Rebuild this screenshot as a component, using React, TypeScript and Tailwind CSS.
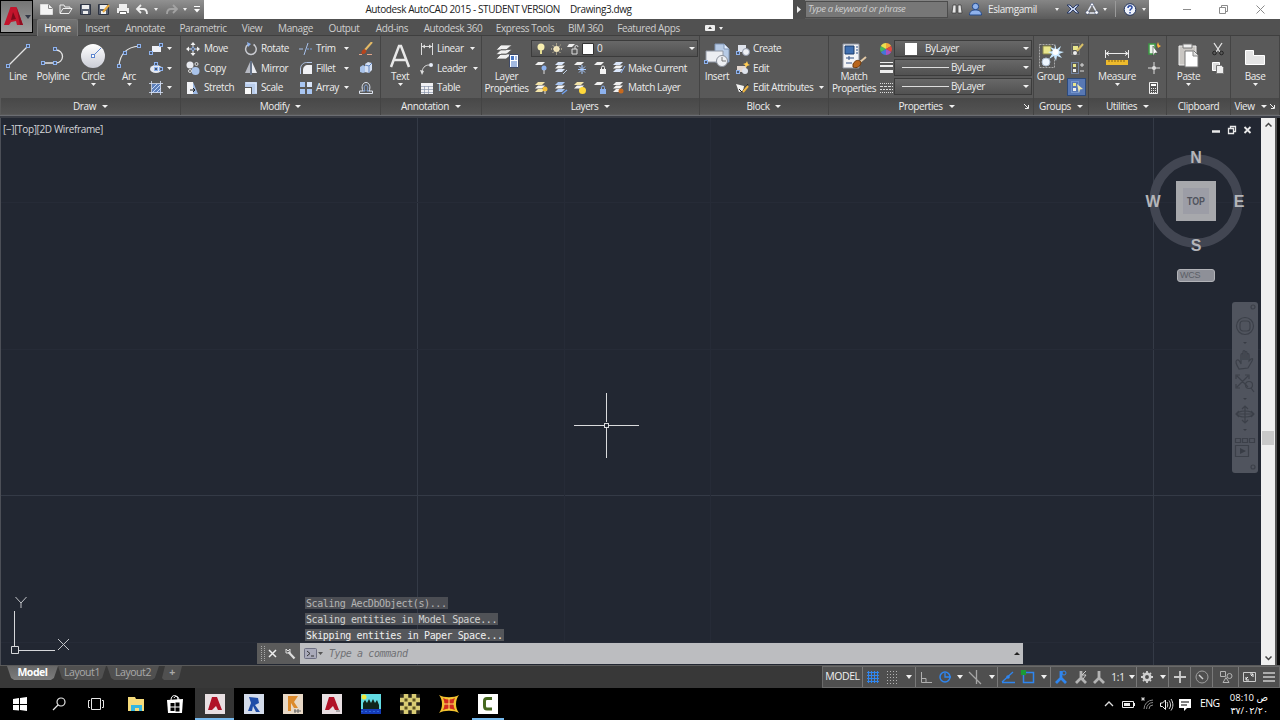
import React from "react";

type IconProps = { w?: number; h?: number; className?: string; children: React.ReactNode };

const Svg = ({ w = 14, h = 14, className = "", children }: IconProps) => (
  <svg width={w} height={h} viewBox={`0 0 ${w} ${h}`} fill="none" className={`shrink-0 ${className}`}>
    {children}
  </svg>
);

const Caret = ({ className = "" }: { className?: string }) => (
  <Svg w={5} h={3} className={className}>
    <path d="M0 0h5L2.500 3z" fill="#f2f2f2" />
  </Svg>
);

const Node = ({ x, y }: { x: number; y: number }) => (
  <rect x={x - 1.5} y={y - 1.5} width="3" height="3" fill="#4b566b" stroke="#8db2ee" />
);

/* ---------- big ribbon icons ---------- */

const LineIcon = () => (
  <Svg w={26} h={26}>
    <path d="M3 23L23 3" stroke="#e4e4e4" strokeWidth="1.2" />
    <Node x={3} y={23} />
    <Node x={23} y={3} />
  </Svg>
);
const PolylineIcon = () => (
  <Svg w={26} h={26}>
    <path d="M3 20h13a6.500 6.500 0 0 0 0-13" stroke="#e4e4e4" strokeWidth="1.3" />
    <Node x={3} y={20} />
    <Node x={15} y={20} />
    <Node x={15} y={6} />
  </Svg>
);
const CircleIcon = () => (
  <Svg w={26} h={26}>
    <defs>
      <linearGradient id="disc" x1="0" y1="0" x2="0" y2="1">
        <stop stopColor="#ffffff" />
        <stop offset="1" stopColor="#cbcdd6" />
      </linearGradient>
    </defs>
    <circle cx="13" cy="13" r="12" fill="url(#disc)" />
    <path d="M13 13l8-8" stroke="#5e86cf" />
    <rect x="11.500" y="11.500" width="3" height="3" fill="#fff" stroke="#5e86cf" />
  </Svg>
);
const ArcIcon = () => (
  <Svg w={26} h={26}>
    <path d="M3 23C4 11 11 4 23 3" stroke="#e4e4e4" strokeWidth="1.2" />
    <Node x={3} y={23} />
    <Node x={9} y={10} />
    <Node x={23} y={3} />
  </Svg>
);
const TextIcon = () => (
  <Svg w={22} h={26}>
    <path d="M2 24L10 3h2l8 21M5.500 17h11" stroke="#e8e8e8" strokeWidth="2.500" />
  </Svg>
);
const LayerPropsIcon = () => (
  <Svg w={26} h={26}>
    <path d="M7 2h11l-6 5H2zM7 6.500h11l-6 5H2zM7 11h11l-6 5H2z" fill="#f1f1f1" stroke="#555" strokeWidth=".7" />
    <path d="M15.500 11.500h9v13h-9z" fill="#fff" stroke="#3f4a66" />
    <path d="M17 13h3v4h-3z" fill="#4775c4" />
    <path d="M21 14h2M21 16h2M17 19h6M17 21h6M17 23h6" stroke="#4775c4" />
  </Svg>
);
const InsertIcon = () => (
  <Svg w={26} h={26}>
    <path d="M11 1h9l5 5v13H11z" fill="#b7cbe6" stroke="#8298b8" />
    <path d="M20 1v5h5" fill="#e5efff" stroke="#8298b8" />
    <path d="M2 8h17v11H2z" fill="#eceef2" stroke="#9097a5" />
    <circle cx="18" cy="18" r="5.500" fill="#eef0f4" stroke="#8a909c" />
    <path d="M18 18v-4M18 18h4" stroke="#777" />
    <Node x={2} y={19} />
  </Svg>
);
const MatchIcon = () => (
  <Svg w={26} h={26}>
    <path d="M2 1h16v24H2z" fill="#f4f4f6" stroke="#8d93a0" />
    <path d="M4 3h9v8H4z" fill="#3f6fb0" stroke="#1f3f6c" />
    <path d="M15 4h2M15 7h2M15 10h2M5 15h8M8 13v4M5 20h6" stroke="#2d4d80" />
    <path d="M25 14l-6 5" stroke="#e3c9a5" strokeWidth="2" />
    <path d="M12 21c3-5 6-4 8-2 0 4-4 7-8 5z" fill="#b8651d" stroke="#6f3a0c" />
  </Svg>
);
const GroupIcon = () => (
  <Svg w={28} h={26}>
    <path d="M2.500 1.500h15v23h-15z" stroke="#a9a9a9" strokeDasharray="2 1" />
    <path d="M6 3h8v8H6z" fill="#e9e68c" stroke="#8c8a4e" />
    <circle cx="9" cy="19" r="4" fill="#eef6ff" stroke="#aebed0" />
    <path d="M18 1l1.500 5.500L24 3l-2 5 5 1-5 2 3 4-5-2-1 5-2-5-5 3 3-5-4-2 5-1-3-4 5 2z" fill="#c9e8ff" />
    <circle cx="18.500" cy="9" r="3" fill="#fff" />
  </Svg>
);
const MeasureIcon = () => (
  <Svg w={26} h={26}>
    <path d="M1.500 7v8M24.500 7v8M2 10.500h22M5 8.500l-3 2 3 2M21 8.500l3 2-3 2" stroke="#ececec" />
    <path d="M2 17h22v5H2z" fill="#edba2c" />
    <path d="M5 17v2M8 17v2M11 17v2M14 17v2M17 17v2M20 17v2" stroke="#8a6510" />
  </Svg>
);
const PasteIcon = () => (
  <Svg w={24} h={26}>
    <path d="M2 3h17v19H2z" fill="#c9c6c2" stroke="#eee" />
    <path d="M6 1h9v4H6z" fill="#efefef" stroke="#777" />
    <path d="M8 8h9l4 4v12H8z" fill="#fff" stroke="#777" />
    <path d="M16 8v5h5" fill="#ddd" stroke="#888" />
  </Svg>
);
const BaseIcon = () => (
  <Svg w={24} h={26}>
    <path d="M2.500 7.500h8v5h11v9h-19z" fill="#e4e4e4" stroke="#fff" />
  </Svg>
);

/* ---------- small ribbon icons ---------- */

const RectIcon = () => (
  <Svg>
    <path d="M3 4h9v6H3z" fill="#eef0f6" />
    <Node x={2} y={11} />
    <Node x={12} y={3} />
  </Svg>
);
const EllipseIcon = () => (
  <Svg>
    <ellipse cx="7" cy="8" rx="6" ry="4" fill="#e6e9f1" />
    <Node x={7} y={8} />
    <Node x={12} y={8} />
    <Node x={7} y={3} />
  </Svg>
);
const HatchIcon = () => (
  <Svg>
    <path d="M3 3h9v9H3z" fill="#5d7fb9" />
    <path d="M3 8l5-5M3 12l9-9M7 12l5-5" stroke="#c5d7f5" />
    <path d="M2.500 0v14M11.500 0v14M0 2.500h14M0 11.500h14" stroke="#d7e1f5" strokeWidth=".8" />
  </Svg>
);
const MoveIcon = () => (
  <Svg>
    <path d="M7 0l2.500 3h-5zM7 14l-2.500-3h5zM0 7l3-2.500v5zM14 7l-3-2.500v5z" fill="#f1f1f1" />
    <path d="M7 3v2M7 9v2M3 7h2M9 7h2" stroke="#eee" />
    <circle cx="7" cy="7" r="1.500" stroke="#8db2ee" />
  </Svg>
);
const CopyIcon = () => (
  <Svg>
    <circle cx="4" cy="4" r="3.500" fill="#e8eaf0" />
    <circle cx="9.500" cy="10" r="4" fill="#a9c3ea" />
    <circle cx="10.500" cy="3" r="1.500" stroke="#ddd" />
    <circle cx="4" cy="10" r="1.500" stroke="#ddd" />
  </Svg>
);
const StretchIcon = () => (
  <Svg>
    <path d="M1 1h6l5 12H1z" fill="#9db9e4" />
    <path d="M1 1h6v12H1z" fill="#f3f4f7" />
    <path d="M4 9h4M7 7l2 2-2 2" stroke="#222" />
  </Svg>
);
const RotateIcon = () => (
  <Svg>
    <path d="M9.500 2.500A5.300 5.300 0 1 1 4 2.700" stroke="#c8cad0" strokeWidth="1.500" />
    <path d="M3 0l4 2-3 3z" fill="#8db2ee" />
  </Svg>
);
const MirrorIcon = () => (
  <Svg>
    <path d="M6 1v11H1z" fill="#b6b9c2" />
    <path d="M8 1v11h5z" fill="#e9ebf1" />
    <path d="M7 0v14" stroke="#7fa5e0" strokeWidth=".7" />
  </Svg>
);
const ScaleIcon = () => (
  <Svg>
    <path d="M1 1h12v12H8V6H1z" fill="#b9cdec" />
    <path d="M1 7h6v6H1z" fill="#fafafa" />
    <path d="M2 2h10v10" stroke="#e8f0ff" />
  </Svg>
);
const TrimIcon = () => (
  <Svg>
    <path d="M0 7h4M9 1L5 13" stroke="#a7c1eb" />
    <path d="M8 7h6" stroke="#7fa5e0" strokeDasharray="2 1" />
  </Svg>
);
const FilletIcon = () => (
  <Svg>
    <path d="M4 13V9c0-3 2-5 5-5h4v9z" fill="#f0f1f5" />
    <path d="M1.500 13V8c0-4 3-6.500 6-6.500H13" stroke="#b4c8ea" />
  </Svg>
);
const ArrayIcon = () => (
  <Svg>
    <path d="M1 1h5v5H1zM8 8h5v5H8zM1 8h5v5H1z" fill="#a9c6f2" />
    <path d="M8 1h5v5H8z" fill="#d9e6fa" />
  </Svg>
);
const EraseIcon = () => (
  <Svg>
    <path d="M13 0L6 8" stroke="#e4ba66" strokeWidth="2" />
    <path d="M3 9c1-2 3-2 4-1 1 2-1 4-3 4s-2-1-1-3z" fill="#b8451d" />
    <path d="M0 12.500h3M8 12.500h5" stroke="#e2a58a" />
  </Svg>
);
const ExplodeIcon = () => (
  <Svg>
    <path d="M1 6l3-2 3 2v5l-3 1-3-1z" fill="#a9c3ea" />
    <path d="M6 3l3-2 4 1v7l-3 3-4-1z" fill="#d3dff3" />
    <path d="M6 4l4 1v7M10 5l3-3" stroke="#6284bd" />
  </Svg>
);
const OffsetIcon = () => (
  <Svg>
    <path d="M.5 12.500h13M.5 12.500V10h3.500C2 6 3.500 1.500 7 1.500s5 4.500 3 8.500h3.500v2.500" stroke="#dfe5f0" />
    <path d="M4 10h2C4.500 6 5.500 4 7 4s2.500 2 1 6h2" stroke="#86a9e0" />
  </Svg>
);
const LinearIcon = () => (
  <Svg>
    <path d="M1.500 1v12M12.500 1v12M2 4.500h10" stroke="#dcdcdc" />
    <path d="M2 4.500l3-2v4zM12 4.500l-3-2v4z" fill="#dcdcdc" />
  </Svg>
);
const LeaderIcon = () => (
  <Svg>
    <path d="M2 12C2 7 5 4 9 4" stroke="#dcdcdc" />
    <circle cx="11" cy="4" r="2" fill="#e8eefa" />
    <path d="M0 9l2 5 2-4z" fill="#dcdcdc" />
  </Svg>
);
const TableIcon = () => (
  <Svg>
    <path d="M1 2h12v11H1z" fill="#f1f1f3" />
    <path d="M1 5.500h12M1 8.500h12M1 11.500h12M4.500 5v8M8.500 5v8" stroke="#8995ab" strokeWidth=".7" />
  </Svg>
);

const Layer = ({ n = 3, color = "#efefef", children }: { n?: number; color?: string; children?: React.ReactNode }) => (
  <Svg>
    {n > 0 && <path d="M4 1h7L8 4H1z" fill={color} />}
    {n > 1 && <path d="M4 4.500h7l-3 3H1z" fill="#f5f5f5" />}
    {n > 2 && <path d="M4 8h7l-3 3H1z" fill={color} />}
    {children}
  </Svg>
);
const Padlock = ({ color }: { color: string }) => (
  <>
    <path d="M7 8h6v5H7z" fill={color} />
    <path d="M8.500 8V6.500a1.500 1.500 0 0 1 3 0V8" stroke={color} />
  </>
);

const layerRow1 = [
  <Layer n={1}><circle cx="10" cy="7" r="2.500" fill="#8db2ee" /><path d="M10 9v4" stroke="#ddd" /></Layer>,
  <Layer color="#dbe7fb"><path d="M9 13l4-4" stroke="#bcd" /></Layer>,
  <Layer n={1}><path d="M9 4v9M5 8.500h8M6 5.500l6 6M12 5.500l-6 6" stroke="#a9cbff" /></Layer>,
  <Layer n={1}><Padlock color="#f2f2f2" /></Layer>,
];
const layerRow2 = [
  <Layer color="#f3e4a8"><circle cx="11" cy="8" r="2.500" fill="#f3bd36" /><path d="M11 10v3" stroke="#ddd" /></Layer>,
  <Layer color="#a9c6f2"><path d="M8 13l5-4" stroke="#6fa0f0" strokeWidth="1.500" /></Layer>,
  <Layer n={2} color="#f3e4a8"><circle cx="9.500" cy="9.500" r="3.500" fill="#ffd83b" /></Layer>,
  <Layer n={1}><Padlock color="#8db2ee" /></Layer>,
];

const BlockCreate = () => (
  <Svg>
    <path d="M2 3h8v7H2z" fill="#dfe3ec" />
    <circle cx="10" cy="10" r="3.500" fill="#eef0f5" stroke="#8f97a8" />
    <Node x={2} y={11} />
  </Svg>
);
const BlockEdit = () => (
  <Svg>
    <path d="M1 5h9v6H1z" fill="#e3d7cf" />
    <circle cx="9" cy="10" r="3" fill="#dfe3ec" />
    <path d="M11 0l1 3 2 1-3 1-1 2-1-3-2-1 3-1z" fill="#ffcb52" />
    <Node x={2} y={11} />
  </Svg>
);
const EditAttr = () => (
  <Svg>
    <path d="M0 3l8 2-1 5-4 1z" fill="#f3f3f3" />
    <path d="M3 8l3 3 6-8" stroke="#222" />
    <path d="M7 11l5-6" stroke="#efb541" strokeWidth="2" />
  </Svg>
);
const ColorWheel = () => (
  <Svg>
    <path d="M7 7V1a6 6 0 0 1 5.200 3z" fill="#f2a83a" />
    <path d="M7 7l5.200-3a6 6 0 0 1 0 6z" fill="#e2483c" />
    <path d="M7 7l5.200 3A6 6 0 0 1 7 13z" fill="#a854c0" />
    <path d="M7 7v6a6 6 0 0 1-5.200-3z" fill="#4575d8" />
    <path d="M7 7l-5.200 3a6 6 0 0 1 0-6z" fill="#45b85c" />
    <path d="M7 7L1.800 4A6 6 0 0 1 7 1z" fill="#eadf4c" />
  </Svg>
);
const WeightIcon = () => (
  <Svg>
    <path d="M1 1.500h13" stroke="#eee" />
    <path d="M1 5h13" stroke="#eee" strokeWidth="2" />
    <path d="M1 10.500h13" stroke="#eee" strokeWidth="3" />
  </Svg>
);
const LinetypeIcon = () => (
  <Svg>
    <path d="M1 2.500h13M1 11.500h13" stroke="#ddd" strokeDasharray="1 1" />
    <path d="M1 5.500h13" stroke="#ddd" strokeDasharray="3 1" />
    <path d="M1 8.500h13" stroke="#ddd" strokeDasharray="2 1" />
  </Svg>
);
const GroupEdit = () => (
  <Svg>
    <path d="M1.500 1.500h8v11h-8z" stroke="#888" strokeDasharray="1 1" />
    <path d="M3 4h5v4H3z" fill="#e9e68c" />
    <circle cx="5" cy="11" r="2" fill="#eee" />
    <path d="M7 9l6-7" stroke="#d8bf66" strokeWidth="2" />
  </Svg>
);
const Ungroup = ({ arrow = false }: { arrow?: boolean }) => (
  <Svg>
    <path d="M1.500 1.500h7v11h-7z" stroke="#8fb0e6" strokeDasharray="1 1" />
    <path d="M3 3h3v3H3z" fill="#e9e68c" />
    <path d="M3 8h3v3H3z" fill="#eee" />
    {arrow ? <path d="M7 4l6 5-3 .5L9 13z" fill="#efe9b0" /> : <path d="M10 4h4M12 2v4M10 10h4" stroke="#ddd" />}
  </Svg>
);
const QuickSelect = () => (
  <Svg>
    <path d="M2 2h6v10H2z" fill="#e9f4e9" stroke="#3c9a44" strokeWidth="1.500" />
    <path d="M6 4l5 7-3 0-2 3z" fill="#fff" stroke="#444" strokeWidth=".6" />
    <path d="M11 0l1 3 2 1-3 2-1-3z" fill="#ffb43b" />
  </Svg>
);
const PointIcon = () => (
  <Svg>
    <path d="M7 1v12M1 7h12" stroke="#ddd" />
    <circle cx="7" cy="7" r="2" fill="#ddd" />
  </Svg>
);
const CalcIcon = () => (
  <Svg>
    <path d="M2.500 1.500h8v11h-8z" fill="#555" stroke="#eee" />
    <path d="M4 3h5v2H4z" fill="#fff" />
    <path d="M4 7.500h5M4 9.500h5M4 11.500h5" stroke="#eee" strokeDasharray="1 1" />
  </Svg>
);
const CutIcon = () => (
  <Svg>
    <path d="M3 1l6 9M11 1L5 10" stroke="#e4e4e4" strokeWidth="1.300" />
    <circle cx="3.500" cy="11" r="1.800" stroke="#222" />
    <circle cx="10.500" cy="11" r="1.800" stroke="#222" />
  </Svg>
);
const CopyClipIcon = () => (
  <Svg>
    <path d="M1.500 1.500h7v8h-7z" fill="#ddd" stroke="#fff" />
    <path d="M5.500 4.500h5l2 2v6h-7z" fill="#eee" stroke="#777" />
  </Svg>
);

/* ---------- ribbon building blocks ---------- */

const Big = ({ icon, lines, width, caret = false }: { icon: React.ReactNode; lines: string[]; width: string; caret?: boolean }) => (
  <div className={`flex shrink-0 flex-col items-center pt-0.5 ${width}`}>
    <div className="flex h-[29px] items-center">{icon}</div>
    {lines.map((l) => (
      <span key={l} className="h-3 leading-3 whitespace-nowrap">{l}</span>
    ))}
    {caret && <Caret className="mt-px" />}
  </div>
);

const Row = ({ icon, text, caret, gap = "gap-[3px]" }: { icon: React.ReactNode; text?: string; caret?: string; gap?: string }) => (
  <div className={`flex h-[19px] items-center nth-2:h-5 ${gap}`}>
    {icon}
    {text && <span className="whitespace-nowrap">{text}</span>}
    {caret && <Caret className={caret} />}
  </div>
);

const Panel = ({ title, width, caret = true, launcher = false, children }: { title: string; width: string; caret?: boolean; launcher?: boolean; children: React.ReactNode }) => (
  <section className={`flex h-full shrink-0 flex-col border-r border-[#444] ${width}`}>
    <div className="flex h-[62px] pt-[3px]">{children}</div>
    <div className="flex h-[16px] items-center bg-linear-to-b from-[#484848] to-[#535353]">
      <div className="flex flex-1 items-center justify-center gap-[6px]">
        <span className="leading-4">{title}</span>
        {caret && <Svg w={6} h={3}><path d="M0 0h6L3 3z" fill="#f2f2f2" /></Svg>}
      </div>
      {launcher && (
        <Svg w={5} h={5} className="mr-1">
          <path d="M0 0l4 4M4.500 1v3.500H1" stroke="#eee" />
        </Svg>
      )}
    </div>
  </section>
);

const Combo = ({ children }: { children: React.ReactNode }) => (
  <div className="flex h-[17px] items-center border border-[#3b3b3b] bg-linear-to-b from-[#686868] to-[#515151] pr-[2px]">
    {children}
    <Svg w={6} h={3} className="ml-auto"><path d="M0 0h6L3 3z" fill="#f2f2f2" /></Svg>
  </div>
);

const Ribbon = () => (
  <div className="flex h-[79px] bg-[#595959] pl-px text-[10px] tracking-[-0.420px] text-[#ededed]">
    <Panel title="Draw" width="w-[180px]">
      <Big icon={<LineIcon />} lines={["Line"]} width="w-[34px]" />
      <Big icon={<PolylineIcon />} lines={["Polyline"]} width="w-9" />
      <Big icon={<CircleIcon />} lines={["Circle"]} width="w-11" caret />
      <Big icon={<ArcIcon />} lines={["Arc"]} width="w-7" caret />
      <div className="pl-1.5">
        <Row icon={<RectIcon />} caret="ml-px" />
        <Row icon={<EllipseIcon />} caret="ml-px" />
        <Row icon={<HatchIcon />} caret="ml-px" />
      </div>
    </Panel>

    <Panel title="Modify" width="w-[200px]">
      <div className="w-[62px] pl-[5px]">
        <Row icon={<MoveIcon />} text="Move" gap="gap-1" />
        <Row icon={<CopyIcon />} text="Copy" gap="gap-1" />
        <Row icon={<StretchIcon />} text="Stretch" gap="gap-1" />
      </div>
      <div className="w-14 pl-px">
        <Row icon={<RotateIcon />} text="Rotate" />
        <Row icon={<MirrorIcon />} text="Mirror" />
        <Row icon={<ScaleIcon />} text="Scale" />
      </div>
      <div className="w-[50px]">
        <Row icon={<TrimIcon />} text="Trim" caret="ml-auto" />
        <Row icon={<FilletIcon />} text="Fillet" caret="ml-auto" />
        <Row icon={<ArrayIcon />} text="Array" caret="ml-auto" />
      </div>
      <div className="pl-[10px]">
        <Row icon={<EraseIcon />} />
        <Row icon={<ExplodeIcon />} />
        <Row icon={<OffsetIcon />} />
      </div>
    </Panel>

    <Panel title="Annotation" width="w-[101px]">
      <Big icon={<TextIcon />} lines={["Text"]} width="w-[38px]" caret />
      <div className="pl-px">
        <Row icon={<LinearIcon />} text="Linear" caret="ml-[3px]" />
        <Row icon={<LeaderIcon />} text="Leader" caret="ml-[3px]" />
        <Row icon={<TableIcon />} text="Table" />
      </div>
    </Panel>

    <Panel title="Layers" width="w-[218px]">
      <Big icon={<LayerPropsIcon />} lines={["Layer", "Properties"]} width="w-[49px]" />
      <div className="w-[167px]">
        <div className="h-[19px] pt-px">
          <Combo>
            <Svg w={64} h={14} className="ml-1">
              <circle cx="5" cy="5" r="3.500" fill="#f8efb0" />
              <path d="M4 8h2v4H4z" fill="#e5dc90" />
              <circle cx="20.500" cy="7" r="3" fill="#f6e9bd" />
              <path d="M20.500 1.500v11M15 7h11M16.500 3l8 8M24.500 3l-8 8" stroke="#e9dcb4" strokeDasharray="1 1" />
              <path d="M33 2h6l-3 3h-5z" fill="#efefef" />
              <path d="M36 7h5v5h-5z" stroke="#ddd" />
              <path d="M39 7V5a1.500 1.500 0 0 1 3 0" stroke="#ddd" />
              <path d="M46.500 1.500h11v11h-11z" fill="#fff" stroke="#333" />
            </Svg>
            <span className="-ml-[3px]">0</span>
          </Combo>
        </div>
        <div className="flex h-[20px] items-center pl-[3px]">
          {layerRow1.map((icon, i) => <div key={i} className="w-[19.500px]">{icon}</div>)}
          <Layer color="#dbe7fb"><path d="M9 12l4-7" stroke="#8db2ee" /></Layer>
          <span className="ml-[2px] whitespace-nowrap">Make Current</span>
        </div>
        <div className="flex h-[19px] items-center pl-[3px]">
          {layerRow2.map((icon, i) => <div key={i} className="w-[19.500px]">{icon}</div>)}
          <Layer><circle cx="9" cy="10" r="2.500" fill="#c86a1e" /></Layer>
          <span className="ml-[2px] whitespace-nowrap">Match Layer</span>
        </div>
      </div>
    </Panel>

    <Panel title="Block" width="w-[129px]">
      <Big icon={<InsertIcon />} lines={["Insert"]} width="w-[34px]" />
      <div className="pl-[2px]">
        <Row icon={<BlockCreate />} text="Create" />
        <Row icon={<BlockEdit />} text="Edit" />
        <Row icon={<EditAttr />} text="Edit Attributes" caret="ml-[3px]" />
      </div>
    </Panel>

    <Panel title="Properties" width="w-[205px]" launcher>
      <Big icon={<MatchIcon />} lines={["Match", "Properties"]} width="w-[50px]" />
      <div className="w-[15px]">
        <Row icon={<ColorWheel />} />
        <Row icon={<WeightIcon />} />
        <Row icon={<LinetypeIcon />} />
      </div>
      <div className="flex w-[138px] flex-col gap-[2px] pt-px">
        <Combo>
          <div className="ml-[10px] size-[12px] bg-white" />
          <span className="ml-[8px]">ByLayer</span>
        </Combo>
        <Combo>
          <div className="ml-[7px] h-px w-[47px] bg-[#ddd]" />
          <span className="ml-[2px]">ByLayer</span>
        </Combo>
        <Combo>
          <div className="ml-[7px] h-px w-[47px] bg-[#ddd]" />
          <span className="ml-[2px]">ByLayer</span>
        </Combo>
      </div>
    </Panel>

    <Panel title="Groups" width="w-[55px]">
      <Big icon={<GroupIcon />} lines={["Group"]} width="w-[33px]" />
      <div>
        <div className="flex h-[19px] items-center px-[3px]"><GroupEdit /></div>
        <div className="flex h-[20px] items-center px-[3px]"><Ungroup /></div>
        <div className="flex h-[18px] w-[19px] items-center border border-[#2c4a7c] bg-[#5878b4] px-[2px]"><Ungroup arrow /></div>
      </div>
    </Panel>

    <Panel title="Utilities" width="w-[78px]">
      <Big icon={<MeasureIcon />} lines={["Measure"]} width="w-14" caret />
      <div className="pl-[2px]">
        <Row icon={<QuickSelect />} />
        <Row icon={<PointIcon />} />
        <Row icon={<CalcIcon />} />
      </div>
    </Panel>

    <Panel title="Clipboard" width="w-16" caret={false}>
      <Big icon={<PasteIcon />} lines={["Paste"]} width="w-[43px]" caret />
      <div className="pl-px">
        <Row icon={<CutIcon />} />
        <Row icon={<CopyClipIcon />} />
      </div>
    </Panel>

    <Panel title="View" width="w-[49px]" launcher>
      <Big icon={<BaseIcon />} lines={["Base"]} width="w-12" caret />
    </Panel>
  </div>
);

/* ---------- title bar ---------- */

const TitleBar = () => (
  <div className="relative flex h-[19px] bg-white text-[10px]">
    <div className="absolute top-0 left-0 z-10 flex h-[33px] w-[33px] items-center gap-px border border-black bg-linear-to-b from-[#757575] to-[#a0a0a0] pl-[3px]">
      <Svg w={20} h={22}>
        <path d="M6.500 1h6l6.500 18h-6l-1-4-5 1-2 3H0z" fill="#c3142c" />
        <path d="M9 6l-2 8 5-1z" fill="#7a0b1b" />
        <path d="M12.500 1l6.500 18h-3z" fill="#8f0d20" />
      </Svg>
      <Svg w={6} h={4}><path d="M0 0h6L3 4z" fill="#333846" /></Svg>
    </div>
    <div className="ml-[33px] flex w-[171px] items-center bg-linear-to-b from-[#919191] to-[#646464]">
      <Svg w={171} h={19}>
        <path d="M7.500 4.500h8l4 4v6h-12z" fill="#f5f5f5" stroke="#ddd" />
        <path d="M15.500 4.500v4h4" stroke="#888" />
        <path d="M27 13V5h4l1 2h5v2" stroke="#eee" />
        <path d="M27 13.500l3-5h9l-3 5z" fill="#777" stroke="#eee" />
        <path d="M47.500 4.500h10v10h-10z" fill="#596172" stroke="#2e3442" />
        <path d="M49 5h7v4h-7zM50 11h5v3h-5z" fill="#eee" />
        <path d="M65.500 4.500h10v10h-10z" fill="#596172" stroke="#2e3442" />
        <path d="M67 5h7v4h-7zM68 11h5v3h-5z" fill="#eee" />
        <path d="M70 12l6-7" stroke="#e8a83a" strokeWidth="2" />
        <path d="M86 4h8v4h-8zM84 8h12v5H84z" fill="#eee" />
        <path d="M86.500 11.500h7v3h-7z" fill="#fff" stroke="#666" />
        <path d="M105 9h5c3 0 4 2 4 5M108 5l-4 4 4 4" stroke="#efefef" strokeWidth="1.800" />
        <path d="M121 8h4l-2 3zM150 8h4l-2 3z" fill="#eee" />
        <path d="M143 9h-5c-3 0-4 2-4 5M140 5l4 4-4 4" stroke="#a3a3a3" strokeWidth="1.800" />
        <path d="M161 6.500h6" stroke="#fff" />
        <path d="M161 9h6l-3 3.500z" fill="#fff" />
      </Svg>
    </div>
    <div className="flex w-[589px] items-center justify-center gap-[10px] tracking-[-0.400px] whitespace-pre text-[#222]">
      <span>Autodesk AutoCAD 2015 - STUDENT VERSION</span>
      <span>Drawing3.dwg</span>
    </div>
    <div className="flex w-[356px] items-center bg-linear-to-b from-[#868686] to-[#5b5b5b] text-[#ededed]">
      <Svg w={12} h={19} className="bg-[#4e4e4e]"><path d="M4 6l4 3.500L4 13z" fill="#eee" /></Svg>
      <div className="flex h-[17px] w-[143px] items-center border border-[#4c4c4c] bg-[#777] pl-[2px] text-[9.500px] tracking-[-0.430px] whitespace-nowrap text-[#cfcfcf] italic">
        Type a keyword or phrase
      </div>
      <Svg w={36} h={19}>
        <path d="M4 13l1-8h3v8zM10 13V5h3l1 8z" fill="#e6e6e6" stroke="#333" strokeWidth=".7" />
        <circle cx="27.500" cy="6.500" r="3.200" fill="#8fb2ec" stroke="#234a8c" />
        <path d="M21.500 15c0-4 3-5 6-5s6 1 6 5z" fill="#8fb2ec" stroke="#234a8c" />
      </Svg>
      <span className="ml-[4px] tracking-[-0.400px]">Eslamgamil</span>
      <Svg w={104} h={19} className="ml-auto">
        <path d="M1 8h4l-2 3zM49 8h4l-2 3zM88 8h4l-2 3z" fill="#eee" transform="translate(9 0)" />
        <path d="M22 5l4 4-4 4h3l3-3 3 3h3l-4-4 4-4h-3l-3 3-3-3z" fill="#c5d2ee" stroke="#23335f" strokeWidth=".9" />
        <path d="M42 13l5-9 5 9z" stroke="#e8ecf6" strokeWidth="1.500" />
        <circle cx="47" cy="4.500" r="1.500" fill="#fff" stroke="#34436a" strokeWidth=".6" />
        <circle cx="42.500" cy="12.500" r="1.800" fill="#fff" stroke="#34436a" strokeWidth=".6" />
        <circle cx="51.500" cy="12.500" r="1.800" fill="#fff" stroke="#34436a" strokeWidth=".6" />
        <path d="M70.500 1v16" stroke="#9a9a9a" />
        <circle cx="85" cy="9.500" r="5.800" fill="#eef2fb" stroke="#24365f" />
        <path d="M83 8c0-3 4-3 4-.5 0 1.500-2 1.500-2 3.200M85 12v1.500" stroke="#2848a0" strokeWidth="1.500" />
      </Svg>
    </div>
    <Svg w={131} h={19}>
      <path d="M34 9.500h8M107.500 5.500l8 8M115.500 5.500l-8 8M70.500 7.500h6v6h-6z" stroke="#8b8b8b" />
      <path d="M72.500 7v-1.500h6v6H77" stroke="#8b8b8b" />
    </Svg>
  </div>
);

const tabs: [string, string][] = [
  ["Insert", "w-[39px]"],
  ["Annotate", "w-[56px]"],
  ["Parametric", "w-[60px]"],
  ["View", "w-[38px]"],
  ["Manage", "w-[49px]"],
  ["Output", "w-[48px]"],
  ["Add-ins", "w-[48px]"],
  ["Autodesk 360", "w-[74px]"],
  ["Express Tools", "w-[70px]"],
  ["BIM 360", "w-[51px]"],
  ["Featured Apps", "w-[75px]"],
];

const TabBar = () => (
  <div className="flex h-[17px] border-b border-[#3f3f3f] bg-[#515151] pl-[37px] text-[10px] leading-[18px] tracking-[-0.400px] text-[#cfcfcf]">
    <div className="h-[17px] w-[41px] rounded-t-xs border border-b-0 border-[#7a7a7a] bg-linear-to-b from-[#737373] to-[#5e5e5e] text-center leading-[17px] text-white">Home</div>
    {tabs.map(([name, width]) => (
      <div key={name} className={`flex shrink-0 justify-center whitespace-nowrap ${width}`}>{name}</div>
    ))}
    <Svg w={20} h={17} className="ml-[19px]">
      <rect x="0" y="6" width="10" height="6" rx="1" fill="#eee" />
      <path d="M3 10h4L5 7.500z" fill="#444" />
      <path d="M14 8h4l-2 3z" fill="#eee" />
    </Svg>
  </div>
);

/* ---------- drawing area ---------- */

const ViewCube = () => (
  <div className="absolute top-[32px] left-[1143px] h-[140px] w-[106px] font-['Liberation_Sans',sans-serif]">
    <Svg w={106} h={140}>
      <circle cx="53" cy="51" r="42" stroke="#424652" strokeWidth="9" />
      <rect x="33" y="31" width="40" height="40" fill="#a7a8ac" />
      <rect x="40" y="38" width="26" height="26" fill="#9c9da6" />
      <rect x="34.500" y="119.500" width="37" height="12" rx="2.500" fill="#8e9098" stroke="#b2b3b8" />
    </Svg>
    <div className="absolute top-0 left-[43px] w-5 text-center text-[16px] leading-4 font-bold text-[#b4b5b9]">N</div>
    <div className="absolute top-[88px] left-[43px] w-5 text-center text-[16px] leading-4 font-bold text-[#b4b5b9]">S</div>
    <div className="absolute top-[44px] left-0 w-5 text-center text-[16px] leading-4 font-bold text-[#b4b5b9]">W</div>
    <div className="absolute top-[44px] left-[86px] w-5 text-center text-[16px] leading-4 font-bold text-[#b4b5b9]">E</div>
    <div className="absolute top-[44px] left-[38px] w-[30px] scale-x-80 text-center text-[11px] leading-[15px] font-bold text-[#50535d]">TOP</div>
    <div className="absolute top-[118px] left-[37px] text-[9px] leading-[14px] tracking-[-0.200px] text-[#5b5e66]">WCS</div>
  </div>
);

const NavBar = () => (
  <div className="absolute top-[184px] left-[1232px]">
    <Svg w={26} h={171}>
      <rect width="26" height="171" rx="3" fill="#50545e" />
      <g stroke="#3c4049" strokeWidth="1.200">
        <circle cx="21" cy="5" r="2" />
        <circle cx="13" cy="24" r="8.500" />
        <rect x="8" y="19" width="10" height="10" rx="3" />
        <path d="M7 67C4 62 3 59 5 58s3 2 4 4v-9c0-2 2-2 2 0v5-8c0-2 2-2 2 0v8-7c0-2 2-2 2 0v7-5c0-2 2-2 2 0v6l2-2c2-1 2 0 1 2l-4 7z" />
        <path d="M5 74l11 11M16 74L5 85M4 77v-4h4M13 73h4v4M4 82v4h4" />
        <circle cx="17" cy="83" r="3.500" />
        <path d="M19 86l3 4M13 104v17M4 112h18M10 107l3-3 3 3M10 118l3 3 3-3M7 109l-3 3 3 3M19 109l3 3-3 3" />
        <ellipse cx="13" cy="112" rx="8" ry="3" />
        <path d="M3.500 136.500h5v4h-5zM10.500 136.500h5v4h-5zM17.500 136.500h5v4h-5zM3.500 143.500h13v11h-13z" />
        <circle cx="21" cy="165" r="2" />
      </g>
      <path d="M11 40h4l-2 2zM11 96h4l-2 2zM11 127h4l-2 2zM8 146l6 3-6 3z" fill="#383c45" />
    </Svg>
  </div>
);

const history: [string, string][] = [
  ["Scaling AecDbObject(s)...", "bg-[#4b4d53] text-[#b4b4b4]"],
  ["Scaling entities in Model Space...", "bg-[#505257] text-[#d2d2d2]"],
  ["Skipping entities in Paper Space...", "bg-[#55575b] text-[#f0f0f0]"],
];

const CommandLine = () => (
  <div className="absolute top-[479px] left-[257px] w-[766px] font-['DejaVu_Sans_Mono','Liberation_Mono',monospace] text-[10px] tracking-[-0.400px]">
    <div className="flex flex-col items-start gap-1 pl-[48px]">
      {history.map(([text, color]) => (
        <div key={text} className={`h-3 px-px leading-[14px] whitespace-pre ${color}`}>{text}</div>
      ))}
    </div>
    <div className="mt-[2px] flex h-[21px] items-center bg-[#bcbdc0]">
      <Svg w={43} h={21} className="bg-[#5b5b5b]">
        <path d="M4.500 3v15M7.500 3v15" stroke="#aaa" strokeDasharray="1 1" />
        <path d="M12 7l7 7M19 7l-7 7" stroke="#eee" strokeWidth="1.500" />
        <path d="M31.500 9l6 6.500" stroke="#ddd" strokeWidth="2.200" />
        <path d="M29 6l2 2 2-2v4h-4z" stroke="#ddd" />
      </Svg>
      <Svg w={24} h={21}>
        <rect x="4.500" y="5.500" width="12" height="10" rx="1" fill="#a9aaba" stroke="#6d6f82" />
        <path d="M7 8l3 2.500L7 13M11 13h3" stroke="#333" />
        <path d="M18 9h5l-2.500 3z" fill="#555" />
      </Svg>
      <span className="ml-[5px] text-[#707175] italic">Type a command</span>
      <Svg w={6} h={4} className="mr-[3px] ml-auto"><path d="M0 3h6L3 0z" fill="#222" /></Svg>
    </div>
  </div>
);

const Canvas = () => (
  <div className="flex h-[547px]">
    <div className="relative w-[1261px] overflow-hidden border-l border-[#4c4f57] bg-[#222732]">
      <div className="absolute top-0 -left-px h-full w-[1261px]">
        <Svg w={1261} h={547}>
          <path d="M417.500 0v547M1153.500 0v547M0 377.500h1261" stroke="#343a46" />
          <path d="M710.500 0v547M564.500 0v547M0 84.500h1261M0 231.500h1261M0 524.500h1261" stroke="#262b37" />
          <path d="M606.500 275v29M606.500 310v30M574 307.500h30M609 307.500h30" stroke="#dadbdd" />
          <rect x="604.500" y="305.500" width="4" height="4" stroke="#dadbdd" />
          <path d="M14.500 493v35M18 532.500h37M11.500 528.500h7v7h-7z" stroke="#d5d6d9" />
          <path d="M15.500 479l5.500 6v5M26.500 479l-5.500 6M58 521l11 11M69 521l-11 11" stroke="#c2c4c8" />
          <path d="M1212 13.500h8" stroke="#e9e9e9" strokeWidth="2.500" />
          <path d="M1228.500 10.500h5v5h-5zM1230.500 10V8.500h5v5h-2" stroke="#e9e9e9" strokeWidth="1.300" />
          <path d="M1244.500 9l6 6M1250.500 9l-6 6" stroke="#e9e9e9" strokeWidth="1.800" />
        </Svg>
        <div className="absolute top-[4px] left-[3px] text-[10px] leading-[14px] tracking-[-0.360px] text-[#d5d6d9]">[−][Top][2D Wireframe]</div>
        <ViewCube />
        <NavBar />
        <CommandLine />
      </div>
    </div>
    <div className="flex w-[14px] flex-col items-center bg-[#efefef] py-[4px]">
      <Svg w={7} h={5}><path d="M.5 4.500l3-3 3 3" stroke="#444" strokeWidth="1.500" /></Svg>
      <div className="mt-[304px] h-[14px] w-3 bg-[#c9c9c9]" />
      <Svg w={7} h={5} className="mt-auto"><path d="M.5 .5l3 3 3-3" stroke="#444" strokeWidth="1.500" /></Svg>
    </div>
    <div className="flex-1 border-l-2 border-[#555] bg-[#0c0c0c]" />
  </div>
);

/* ---------- status bar ---------- */

const Cell = ({ w, sep = false, children }: { w: string; sep?: boolean; children: React.ReactNode }) => (
  <div className={`flex h-full shrink-0 items-center justify-center ${w} ${sep ? "border-r border-[#797979]" : ""}`}>{children}</div>
);
const Down = () => <Svg w={6} h={4}><path d="M0 0h6L3 4z" fill="#f0f0f0" /></Svg>;
const Person = ({ color, children }: { color: string; children?: React.ReactNode }) => (
  <Svg>
    <path d="M7 1v7M7 6v2l-5 5M7 8l5 5" stroke={color} strokeWidth="2.800" />
    {children}
  </Svg>
);

const StatusBar = () => (
  <div className="flex h-[23px] justify-between border-t border-[#5a5a5a] bg-[#383838] text-[10.500px] tracking-[-0.450px]">
    <div className="flex h-[14px] pl-[7px] leading-[13px] text-[#aaa]">
      <div className="w-[51px] bg-linear-to-b from-[#666] to-[#7d7d7d] text-center font-bold text-white [clip-path:polygon(0_0,100%_0,92%_85%,86%_100%,14%_100%,8%_85%)]">Model</div>
      <div className="w-[48px] bg-[#505050] text-center [clip-path:polygon(0_0,100%_0,92%_85%,86%_100%,14%_100%,8%_85%)]">Layout1</div>
      <div className="ml-px w-[52px] bg-[#505050] text-center [clip-path:polygon(0_0,100%_0,92%_85%,86%_100%,14%_100%,8%_85%)]">Layout2</div>
      <div className="ml-[3px] w-[20px] bg-[#505050] text-center font-bold [clip-path:polygon(15%_0,100%_0,85%_85%,75%_100%,10%_100%,0_85%)]">+</div>
    </div>
    <div className="flex h-[22px] w-[458px] border border-[#6a6a6a] bg-[#4f4f4f] text-[#f0f0f0]">
      <Cell w="w-[40px]" sep>MODEL</Cell>
      <Cell w="w-[20px]">
        <Svg><path d="M2.500 1v12M5.500 1v12M8.500 1v12M11.500 1v12M1 2.500h12M1 5.500h12M1 8.500h12M1 11.500h12" stroke="#2f86f0" /></Svg>
      </Cell>
      <Cell w="w-[20px]">
        <Svg>
          <path d="M1 1.500h12M1 4.500h12M1 7.500h12M1 10.500h12M1 13.500h12" stroke="#b4b4b4" strokeDasharray="1 2" />
        </Svg>
      </Cell>
      <Cell w="w-[13px]" sep><Down /></Cell>
      <Cell w="w-[19px]"><Svg><path d="M2.500 2v10.500H13M3 8.500h4v4" stroke="#b0b0b0" /></Svg></Cell>
      <Cell w="w-[19px]">
        <Svg>
          <circle cx="7" cy="7" r="5" stroke="#2f86f0" strokeWidth="1.500" />
          <path d="M7 3v4h6" stroke="#2f86f0" strokeWidth="1.300" />
        </Svg>
      </Cell>
      <Cell w="w-[12px]"><Down /></Cell>
      <Cell w="w-[20px]"><Svg w={16} h={16}><path d="M1 3l12 12M8.500 1v14" stroke="#a5a5a5" strokeWidth="1.300" /></Svg></Cell>
      <Cell w="w-[12px]" sep><Down /></Cell>
      <Cell w="w-[20px]">
        <Svg>
          <path d="M1 12.500h13M1 12L12 2" stroke="#2f86f0" strokeWidth="1.300" />
          <circle cx="7" cy="7" r="1.800" fill="#2f86f0" />
        </Svg>
      </Cell>
      <Cell w="w-[20px]">
        <Svg>
          <path d="M2.500 2.500h10v10h-10z" stroke="#2f86f0" strokeWidth="1.500" />
          <path d="M0 0h5v5H0z" fill="#1b9a34" />
        </Svg>
      </Cell>
      <Cell w="w-[13px]" sep><Down /></Cell>
      <Cell w="w-[20px]"><Person color="#2f86f0"><circle cx="10" cy="3" r="2" stroke="#2f86f0" /></Person></Cell>
      <Cell w="w-[19px]"><Person color="#b4b4b4"><path d="M12 1l-4 4h4L9 9" stroke="#ccc" /></Person></Cell>
      <Cell w="w-[18px]"><Person color="#b4b4b4" /></Cell>
      <Cell w="w-[20px]"><span className="text-[10px] tracking-[-0.200px]">1:1</span></Cell>
      <Cell w="w-[9px]" sep><Down /></Cell>
      <Cell w="w-[20px]">
        <Svg>
          <circle cx="7" cy="7" r="3.200" stroke="#d0d0d0" strokeWidth="2.500" />
          <path d="M7 1v2M7 11v2M1 7h2M11 7h2M3 3l1 1M11 3l-1 1M3 11l1-1M11 11l-1-1" stroke="#d0d0d0" strokeWidth="1.800" />
        </Svg>
      </Cell>
      <Cell w="w-[12px]" sep><Down /></Cell>
      <Cell w="w-[22px]" sep><Svg w={12} h={12}><path d="M6 0v12M0 6h12" stroke="#ccc" strokeWidth="1.800" /></Svg></Cell>
      <Cell w="w-[22px]" sep>
        <Svg>
          <circle cx="7" cy="7" r="6" stroke="#a0a0a0" />
          <path d="M4 5l4 4" stroke="#d0d0d0" strokeWidth="1.500" />
        </Svg>
      </Cell>
      <Cell w="w-[26px]" sep>
        <Svg>
          <path d="M1.500 1.500h5v5h-5zM4 12.500l3-5 3 5z" stroke="#b4b4b4" />
          <circle cx="10.500" cy="6" r="2.500" stroke="#b4b4b4" />
        </Svg>
      </Cell>
      <Cell w="w-[20px]">
        <Svg>
          <path d="M1.500 2.500h12v9h-12z" stroke="#ccc" />
          <path d="M4 9l2-2M9 6l2-2M8 4h3v3M4 7v3h3" stroke="#eee" />
        </Svg>
      </Cell>
      <Cell w="w-[20px]"><Svg w={12} h={12}><path d="M0 2h12M0 6h12M0 10h12" stroke="#ccc" strokeWidth="1.500" /></Svg></Cell>
    </div>
  </div>
);

/* ---------- taskbar ---------- */

const Tile = ({ bg, children }: { bg: string; children: React.ReactNode }) => (
  <Svg w={20} h={20}>
    <path d="M0 0h20v20H0z" fill={bg} />
    {children}
  </Svg>
);

const taskIcons = [
  <Svg w={14} h={14}><path d="M0 2l6-1v6H0zM7 1l7-1v7H7zM0 8h6v5.500L0 13zM7 8h7v6l-7-1z" fill="#fff" /></Svg>,
  <Svg><circle cx="9" cy="5" r="4" stroke="#e6e6e6" strokeWidth="1.200" /><path d="M6 8l-5 5" stroke="#e6e6e6" strokeWidth="1.300" /></Svg>,
  <Svg w={16} h={14} className="-ml-[3px]"><path d="M3.500 1.500h9v11h-9zM2 3.500H.5v7H2M14 3.500h1.500v7H14" stroke="#e6e6e6" /></Svg>,
  <Svg w={18} h={16} className="-ml-[2px]">
    <path d="M1 1h7l1 2h8v12H1z" fill="#f5da7a" />
    <path d="M4 9h11v6h-3v-3H8v3H4z" fill="#33b6e0" />
  </Svg>,
  <Svg w={18} h={20} className="-ml-[2px]">
    <path d="M5 6c0-6 7-6 7 0M8 4c1-3 5-2 5 2" stroke="#fff" />
    <path d="M1 6l16-1-1 14H2z" fill="#fff" />
    <path d="M4.500 9h4v3.500h-4zM9.500 8.500h4v4h-4zM4.500 13.500h4V17h-4zM9.500 13.500h4v4h-4z" fill="#000" />
  </Svg>,
  <Tile bg="#e8dfe2"><path d="M7 3h5l5 13h-4l-2-4-4 4H3z" fill="#b01228" /></Tile>,
  <Tile bg="#d3dbea"><path d="M5 3l9 1 1 5-4 2 5 7h-4l-3-6-1 5H4l3-8z" fill="#1f4da8" /></Tile>,
  <Tile bg="#e8d8c6">
    <path d="M5 2h10l-4 6 4 6h-4L8 9v8H5z" fill="#dc8a2c" />
    <path d="M11 17h7M12 15v4M15 15v4" stroke="#666" />
  </Tile>,
  <Tile bg="#e8dfe2">
    <path d="M7 3h5l5 13h-4l-2-4-4 4H3z" fill="#b01228" />
    <path d="M14 17h4" stroke="#777" />
  </Tile>,
  <Tile bg="#62dbe2">
    <path d="M0 15h20v5H0z" fill="#153bb8" />
    <path d="M2 15V9l2-3 2 3 2-4 2 4 2-4 2 4 2-3 2 5v4z" fill="#10251a" />
    <circle cx="3" cy="3" r="2.500" fill="#f1e93c" />
    <path d="M0 17.500h20" stroke="#2a68e0" strokeDasharray="2 2" />
  </Tile>,
  <Tile bg="#28251a">
    <path d="M0 6h20M0 14h20M6 0v20M14 0v20" stroke="#d9cc74" strokeWidth="4.500" />
    <path d="M4.500 4.500h3v3h-3zM12.500 4.500h3v3h-3zM4.500 12.500h3v3h-3zM12.500 12.500h3v3h-3z" fill="#5d5220" />
  </Tile>,
  <Svg w={20} h={20}>
    <path d="M0 1c5 3 15 3 20 0-4 5-4 13 0 18-5-3-15-3-20 0 4-5 4-13 0-18z" fill="#f3c32f" />
    <path d="M4 4c4 2 8 2 12 0-2 4-2 8 0 12-4-2-8-2-12 0 2-4 2-8 0-12z" fill="#d12b20" />
    <path d="M10 4v12M5 10h10" stroke="#ffdf6b" />
  </Svg>,
  <Tile bg="#fff"><path d="M14 4.500H9C7 4.500 6.500 5.500 6.500 7v5c0 2 .5 3 2.500 3h5" stroke="#46681f" strokeWidth="3" /></Tile>,
];

const Taskbar = () => (
  <div className="flex h-8 bg-black text-white">
    {taskIcons.map((icon, i) => (
      <div key={i} className={`relative flex w-[39px] items-center justify-center ${i === 5 ? "bg-[#343434]" : ""}`}>
        {icon}
        {i === 5 && <div className="absolute bottom-0 left-0 h-[2px] w-full bg-[#76b9ed]" />}
        {i === 12 && <div className="absolute bottom-0 left-[4px] h-[2px] w-8 bg-[#76b9ed]" />}
      </div>
    ))}
    <div className="ml-auto flex items-center pr-[12px] text-[10.500px]">
      <Svg w={98} h={18}>
        <path d="M3 11l4-4 4 4" stroke="#ddd" strokeWidth="1.300" />
        <path d="M20.500 6.500h11v6h-11zM32.500 8v3" stroke="#eee" />
        <path d="M22 8h6v3h-6z" fill="#eee" />
        <path d="M42 14a9 9 0 0 1 9-9M44.500 14a6.500 6.500 0 0 1 6.500-6.500M47 14a4 4 0 0 1 4-4" stroke="#888" />
        <path d="M41 2v4M39 4h4M39.500 2.500l3 3M42.500 2.500l-3 3" stroke="#eee" strokeWidth=".7" />
        <path d="M58.500 8v3.500h2l3 3V5l-3 3z" stroke="#eee" />
        <path d="M65 7c1 2 1 4 0 5.500M67 5.500c2 3 2 6 0 8.500M69 4c2.500 4 2.500 8 0 11.500" stroke="#ddd" />
        <path d="M77 4h12v9h-4l-3 3v-3h-5z" fill="#fff" />
        <path d="M79 7h8M79 10h6" stroke="#000" />
      </Svg>
      <span className="w-[18px] tracking-[-0.600px] whitespace-nowrap">ENG</span>
      <div className="ml-[14px] flex w-[36px] flex-col items-end font-['Open_Sans','DejaVu_Sans',sans-serif] leading-[13px]">
        <span dir="rtl" className="text-[9.500px] whitespace-nowrap">ص 08:10</span>
        <span className="text-[9.500px] whitespace-nowrap"><bdo dir="ltr">٣٧/٠٢/٢٠</bdo></span>
      </div>
    </div>
  </div>
);

export default function App() {
  return (
    <div className="flex h-[720px] w-[1280px] flex-col overflow-hidden bg-[#383838] font-['Open_Sans','Noto_Sans',sans-serif]">
      <TitleBar />
      <TabBar />
      <Ribbon />
      <div className="h-[3px] border-t border-[#6b6d72] bg-[#3a3d45]" />
      <Canvas />
      <StatusBar />
      <Taskbar />
    </div>
  );
}
